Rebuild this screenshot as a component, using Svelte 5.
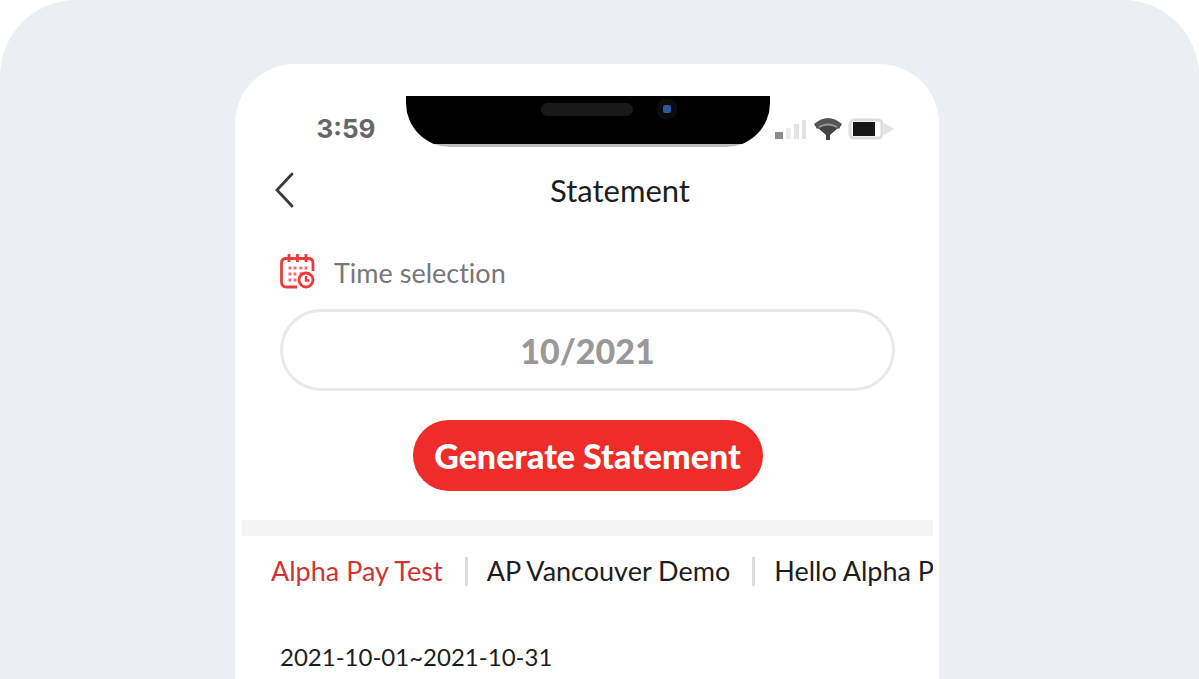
<script>
  let month = $state('10/2021');
  let selected = $state(0);

  const accounts = ['Alpha Pay Test', 'AP Vancouver Demo', 'Hello Alpha Pay'];
  const dots = [
    [10, 14], [15, 14], [21, 14], [26, 14],
    [10, 20], [15, 20], [21, 20],
    [10, 26], [15, 26],
  ];
</script>

<main class="stage">
  <div class="phone">
    <div class="status">
      <span class="clock">3:59</span>
      <div class="notch">
        <span class="speaker"></span>
        <span class="camera"></span>
      </div>
      <svg class="signals" width="120" height="32" viewBox="0 0 120 32" aria-hidden="true">
        <rect x="0" y="17" width="8" height="7" fill="#8c8c8c" />
        <rect x="11" y="13" width="5" height="11" fill="#ececec" />
        <rect x="19" y="9" width="5" height="15" fill="#e4e4e4" />
        <rect x="27" y="5" width="4" height="19" fill="#e2e2e2" />
        <path d="M39 9Q53-3 67 9L64 14Q53 7 42 14Z" fill="#555" />
        <path d="M43 13Q53 6 63 13L55 20V25H51V20Z" fill="#444" />
        <path d="M44 12Q53 7 62 12" fill="none" stroke="#999" stroke-width="2" />
        <rect x="75" y="5" width="32" height="18" rx="4" fill="#fff" stroke="#dcdcdc" stroke-width="3" />
        <rect x="78" y="7" width="22" height="14" fill="#161616" />
        <path d="M109 8l10 6-10 6z" fill="#e2e2e2" />
      </svg>
    </div>

    <header class="header">
      <button class="back" aria-label="Back">
        <svg width="20" height="36" viewBox="0 0 20 36">
          <path d="M17 2L2 18L17 34" fill="none" stroke="#3a3a3c" stroke-width="2.8" stroke-linecap="round" />
        </svg>
      </button>
      <h1>Statement</h1>
    </header>

    <form class="form" onsubmit={(e) => e.preventDefault()}>
      <label for="month">
        <svg width="36" height="36" viewBox="0 0 36 36" fill="none" stroke="#ec3b3b" aria-hidden="true">
          <path d="M17 33H6.500Q1.500 33 1.500 28V9Q1.500 4.500 6.500 4.500H28Q33 4.500 33 9V17" stroke-width="2.800" />
          <path d="M9 0V8M17.500 0V8M26 0V8" stroke-width="2.800" />
          {#each dots as [x, y]}
            <rect x={x - 1.5} y={y - 1.5} width="3" height="3" fill="#f07070" stroke="none" />
          {/each}
          <circle cx="26" cy="26" r="7" stroke-width="2.800" />
          <path d="M26 22V26.500H29.500" stroke-width="2.400" />
        </svg>
        Time selection
      </label>
      <input id="month" type="text" bind:value={month} />
      <button class="generate" type="submit">Generate Statement</button>
    </form>

    <nav class="accounts">
      {#each accounts as account, i}
        <button class:active={selected === i} onclick={() => (selected = i)}>{account}</button>
      {/each}
    </nav>

    <p class="period">2021-10-01~2021-10-31</p>
  </div>
</main>

<style>
  :global(body) { background: #fff; }
  .stage {
    display: grid;
    grid-template-columns: 235fr 704fr 260fr;
    box-sizing: border-box;
    height: 100vh;
    padding-top: 64px;
    overflow: hidden;
    background: #ebeff4;
    border-radius: 76px 76px 0 0;
    font-family: Lato, "Open Sans", sans-serif;
    font-variant-ligatures: none;
    color: #1d1d1f;
  }
  .phone {
    grid-column: 2;
    min-width: 0;
    padding: 32px 6px 0 7px;
    background: #fff;
    border-radius: 60px 60px 0 0;
  }
  button { padding: 0; border: 0; background: none; font: inherit; color: inherit; cursor: pointer; }

  .status { display: grid; grid-template-columns: 1fr 364px 1fr; height: 52px; }
  .clock {
    align-self: center;
    justify-self: end;
    padding: 14px 30px 0 0;
    font: 700 26px/32px Inter, sans-serif;
    color: #666;
  }
  .notch {
    display: flex;
    justify-content: flex-end;
    align-items: flex-start;
    gap: 24px;
    box-sizing: border-box;
    height: 51px;
    padding: 7px 93px 0 0;
    background: linear-gradient(#000 48px, #bbb 48px);
    border-radius: 0 0 44px 44px;
  }
  .speaker { width: 92px; height: 13px; border-radius: 7px; background: #191919; }
  .camera { box-sizing: border-box; width: 20px; height: 20px; margin-top: -4px; border: 6px solid #0b0b0b; border-radius: 8px; background: #2a5a9b; }
  .signals { margin: 19px 0 0 5px; }

  .header { display: grid; grid-template-columns: 20px 1fr; gap: 12px; align-items: center; height: 84px; padding-left: 33px; }
  .back { height: 36px; }
  .back svg { display: block; }
  h1 { margin: 0; font-size: 31px; line-height: 40px; font-weight: 400; text-align: center; }

  .form { display: flex; flex-direction: column; padding: 20px 38px 29px; border-bottom: 16px solid #f3f3f3; }
  label { display: flex; align-items: center; gap: 18px; height: 40px; font-size: 27px; color: #77777a; }
  input {
    box-sizing: border-box;
    width: 100%;
    height: 82px;
    margin-top: 17px;
    border: 3px solid #e9e9e9;
    border-radius: 41px;
    background: #fff;
    font: 900 34px/40px Lato, sans-serif;
    color: #999;
    text-align: center;
  }
  .generate {
    align-self: center;
    width: 350px;
    height: 71px;
    margin-top: 29px;
    border-radius: 36px;
    background: #ee2d2a;
    color: #fff;
    font-size: 34px;
    font-weight: 900;
  }

  .accounts { display: flex; align-items: center; gap: 22px; height: 70px; padding-left: 29px; overflow: hidden; font-size: 27px; line-height: 32px; }
  .accounts button { flex: none; }
  .accounts button + button { padding-left: 22px; background: linear-gradient(#ddd, #ddd) left center / 3px 29px no-repeat; }
  .accounts .active { color: #ce3436; }
  .period { margin: 35px 38px 0; font-size: 24px; line-height: 32px; white-space: nowrap; }
</style>
